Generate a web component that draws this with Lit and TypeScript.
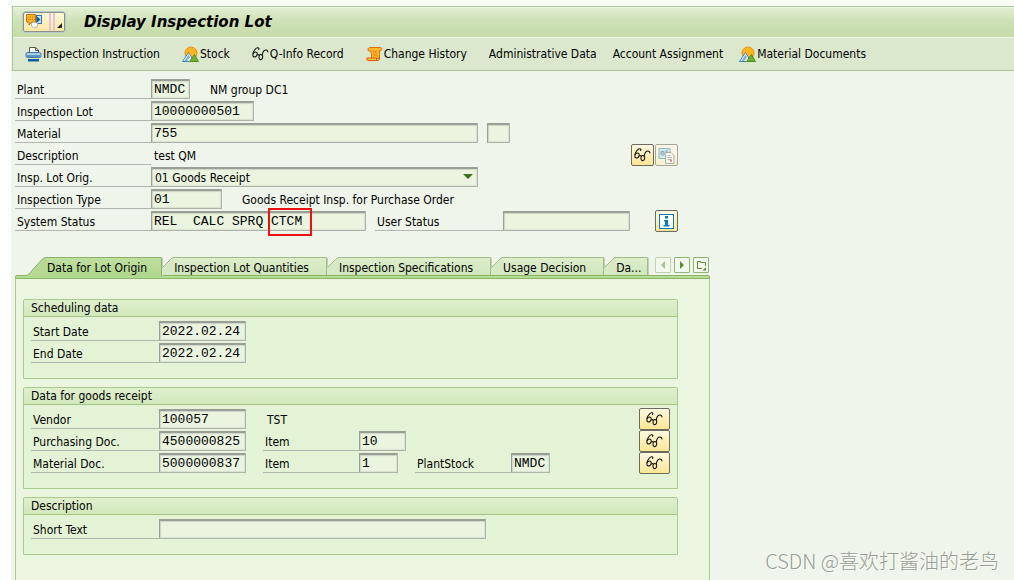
import { LitElement, html, css, nothing } from "lit";
import { customElement, property } from "lit/decorators.js";

const glasses = () => html`<svg class="icon" width="17" height="14" viewBox="0 0 17 14" fill="none" stroke="#111" stroke-width="1.1" aria-hidden="true">
  <path d="M.9 6.800C1.300 4.500 3.600 1 5.400 .8C7 .6 7.300 1.600 6.400 2.900" />
  <path d="M2.600 5.200C4.200 4.500 5.500 5.600 5.200 7.400C4.900 9.200 3.400 10.200 2 9.900C.3 9.500 .4 6.200 2.600 5.200Z" />
  <path d="M5.200 8L7.200 7.600" />
  <path d="M8.200 7.600C9.800 7.200 10.900 8.400 10.700 10C10.500 11.900 9.400 12.900 8.200 12.600C6.600 12.200 6.500 8.200 8.200 7.600Z" />
  <path d="M10.300 8.200C10.500 6 11.600 3.400 13.600 3C15.200 2.800 16 3.800 15.900 5.400" />
</svg>`;

const printer = html`<svg class="icon" width="17" height="17" viewBox="0 0 17 17" aria-hidden="true">
  <path d="M4.500 7V1.500H10.500L13.500 4V7Z" fill="#fff" stroke="#555" />
  <path d="M10.500 1.500V4.500H13.500" fill="none" stroke="#555" />
  <rect x="1" y="6.500" width="15" height="5" rx="1.500" fill="#a9cbe6" stroke="#3a78ad" />
  <rect x="2" y="9" width="13" height="2" fill="#5d97c6" />
  <rect x="3" y="13" width="11" height="2.500" fill="#0f5c99" />
</svg>`;

const stock = html`<svg class="icon" width="17" height="17" viewBox="0 0 17 17" aria-hidden="true">
  <circle cx="9" cy="7" r="6" fill="#fcb51c" stroke="#f08c10" />
  <path d="M.5 15.500L6.500 6.500L12 15.500Z" fill="#fff" stroke="#3d83bb" />
  <path d="M2.500 15L6.500 8.500L8 11.500L5 15Z" fill="#79aed6" />
  <path d="M7.500 15.500L12.500 8.500L16.500 15.500Z" fill="#74b12e" stroke="#4d8e1e" />
</svg>`;

const scroll = html`<svg class="icon" width="17" height="16" viewBox="0 0 17 16" aria-hidden="true">
  <path d="M3.500 1.500H14.500C16.500 2 16 4.500 14.500 4.500H13.500V12.500H5C6 9 5.500 7 4.500 5H2.500C1.500 3.500 2 2 3.500 1.500Z" fill="#fdb92c" stroke="#e06a10" />
  <path d="M.8 12H10.500V14.500H2C1 14.500.600 13.500.800 12Z" fill="#fdc53f" stroke="#d8590d" />
  <path d="M10.500 14.500C13 15 14 13.500 13.500 11.500" fill="none" stroke="#d8590d" />
  <path d="M6 4.500L11 7.500L7 10.500M11 4.500L7 7.500L12 10.500" fill="none" stroke="#f08a18" />
</svg>`;

const services = html`<svg class="icon" width="17" height="15" viewBox="0 0 17 15" aria-hidden="true">
  <path d="M.5 .5H9.500V8H6L3 11V8H.5Z" fill="#fdb52a" stroke="#d86d10" />
  <path d="M2 3H8.500M2 5.500H8.500" stroke="#d86d10" stroke-dasharray="1 1" />
  <rect x="10.500" y="1.500" width="5" height="8" fill="#cfe3f2" stroke="#2d77b2" />
  <path d="M11 2.500L14.500 5.500L11 8.500Z" fill="#125a94" />
  <path d="M5.500 9L8 8L12 9.500L11 13L8 14L5.500 12Z" fill="#fff" stroke="#9b9b9b" stroke-width=".7" />
</svg>`;

const copyDocs = html`<svg class="icon" width="17" height="17" viewBox="0 0 17 17" aria-hidden="true">
  <rect x="1" y="1.500" width="11" height="10" fill="#dcebe9" stroke="#8db8ca" />
  <path d="M3 4.500H6V8H3ZM3 6H6M8 3V6M8 4H10" fill="none" stroke="#7fb0c4" />
  <path d="M7.500 5.500H13L16 8.500V16.500H7.500Z" fill="#fbfaf3" stroke="#adadab" />
  <path d="M9.500 8.500H12.500M9.500 10.500H14M9.500 12.500H13" stroke="#b9b9b6" />
  <rect x="12" y="12.500" width="2" height="2" fill="#e5776a" />
</svg>`;

const info = html`<svg class="icon" width="15" height="15" viewBox="0 0 15 15" aria-hidden="true">
  <rect x=".5" y=".5" width="14" height="14" fill="#fff" stroke="#0a7ac2" />
  <path d="M6 2H9V4.500H6ZM5 6H9V11H10.500V12.500H4.500V11H6V7.500H5Z" fill="#0a7ac2" />
</svg>`;

/** A read-only field; `label` draws the underlined caption in front of it. */
@customElement("sap-field")
class SapField extends LitElement {
  @property() label = "";
  @property() name = "";
  @property() value = "";
  @property() caption = "wide";
  @property() size = "m";

  static styles = css`
    :host { display: flex; height: 20px; }
    .caption {
      box-sizing: border-box; height: 20px; padding-left: 2px; flex: none;
      border-bottom: 1px solid #b2b5ae; line-height: 23px; white-space: nowrap;
    }
    .wide { width: 136px; }
    .medium { width: 128px; }
    .narrow { width: 96px; }
    .box {
      box-sizing: border-box; height: 20px; margin: 0; padding: 0 2px; flex: none;
      border: 1px solid #b0b3aa; border-top: 2px solid #9b9e97; border-left-color: #9b9e97;
      border-radius: 1px; background: #eaf4df; color: #000; outline: none;
      box-shadow: inset 1px 1px 1px #cdd4c5, inset -1px -1px 1px #dae1d1;
      font: 13px/17px "Liberation Mono", monospace;
    }
    .xs { width: 23px; }
    .s { width: 39px; }
    .sm { width: 47px; }
    .type { width: 71px; }
    .m { width: 87px; }
    .l { width: 103px; }
    .user { width: 127px; }
    .status { width: 215px; }
    .xl { width: 327px; }
  `;

  render() {
    return html`
      ${this.label ? html`<label class="caption ${this.caption}" for="box">${this.label}</label>` : nothing}
      <input id="box" class="box ${this.size}" name=${this.name} aria-label=${this.label || this.name} .value=${this.value} readonly />
    `;
  }
}

const toolbar = [
  { text: "Inspection Instruction", icon: printer },
  { text: "Stock", icon: stock },
  { text: "Q-Info Record", icon: glasses() },
  { text: "Change History", icon: scroll },
  { text: "Administrative Data" },
  { text: "Account Assignment" },
  { text: "Material Documents", icon: stock },
];

const tabs = ["Data for Lot Origin", "Inspection Lot Quantities", "Inspection Specifications", "Usage Decision", "Da..."];

@customElement("app-root")
class AppRoot extends LitElement {
  static styles = css`
    :host {
      display: block; color: #000;
      font: 12px/16px "DejaVu Sans Condensed", "DejaVu Sans", sans-serif;
    }
    button { font: inherit; color: inherit; }
    .icon { display: block; flex: none; }
    .page {
      box-sizing: border-box; position: relative; display: flex; flex-direction: column;
      min-height: 100vh; margin-left: 11px; padding-top: 6px; overflow: hidden;
      background: linear-gradient(#fafcf8, #f8faf5 6px, #eff5ea 6px);
    }
    .head { margin-left: 1px; border: 1px solid #afc69c; border-right: 0; }
    .titlebar {
      display: flex; align-items: center; gap: 19px; box-sizing: border-box; height: 30px; padding: 0 10px 2px;
      background: linear-gradient(#e2eed3, #d0e2b9 40%, #c4dba8); border-top: 1px solid #edf5e3;
    }
    .title {
      margin: 0; font: oblique bold 15px/20px "DejaVu Sans", sans-serif; white-space: nowrap;
    }
    .services {
      display: flex; align-items: center; box-sizing: border-box; width: 42px; height: 20px; padding: 0 0 0 2px;
      border: 1px solid #8b8f84; border-radius: 2px; outline: 1px solid #b6c8d0;
      background: linear-gradient(#fff8dc, #fde9a4);
    }
    .split { box-sizing: border-box; width: 6px; height: 18px; margin-left: 6px; border: solid #e8c3d6; border-width: 0 2px; }
    .corner { align-self: flex-end; margin: 0 0 3px 2px; border: 0 solid transparent; border-left-width: 5px; border-bottom: 5px solid #222; }
    .toolbar {
      display: flex; align-items: center; gap: 16px; height: 32px; padding-left: 12px;
      background: #dce8ce; border-top: 1px solid #f3f8ed;
    }
    .tool {
      display: flex; align-items: center; gap: 1px; padding: 0; border: 0; background: none; white-space: nowrap;
    }
    .tool.pictured { padding-right: 6px; }
    .form { display: flex; flex-direction: column; gap: 2px; max-width: 663px; margin: 8px 0 0 4px; }
    .row { display: flex; height: 20px; position: relative; }
    .row.tight { gap: 9px; }
    .note { line-height: 23px; padding-left: 20px; white-space: nowrap; }
    .note.near { padding-left: 3px; }
    .end { display: flex; gap: 1px; margin: -1px 0 -1px auto; }
    .caption {
      box-sizing: border-box; width: 136px; padding-left: 2px; line-height: 23px; border-bottom: 1px solid #b2b5ae;
    }
    .drop { position: relative; width: 327px; }
    .choice {
      appearance: none; box-sizing: border-box; width: 100%; height: 20px; padding: 0 3px; display: block;
      border: 1px solid #b0b3aa; border-top: 2px solid #9b9e97; border-left-color: #9b9e97; border-radius: 1px;
      background: #eaf4df; color: #000; font: inherit;
      box-shadow: inset 1px 1px 1px #cdd4c5, inset -1px -1px 1px #dae1d1;
    }
    .arrow { position: absolute; right: 5px; top: 7px; border: 5px solid transparent; border-top-color: #3b6e1d; border-bottom: 0; pointer-events: none; }
    .marker { position: absolute; left: 253px; top: -3px; width: 40px; height: 24px; border: 2px solid #ee1111; }
    .push {
      display: flex; align-items: center; justify-content: center; box-sizing: border-box; width: 23px; height: 22px; padding: 0;
      border: 1px solid #6c6a5c; border-radius: 2px; background: linear-gradient(#fff9e3, #fff0bb 45%, #fde596);
    }
    .push.wide { width: 31px; }
    .push[disabled] { border-color: #a8a698; background: linear-gradient(#fbf8e8, #f8f1cf); }

    .book { display: flex; flex-direction: column; flex: 1; max-width: 695px; margin: 26px 0 0 4px; }
    .strip { display: flex; align-items: flex-start; position: relative; z-index: 1; margin-bottom: -2px; padding-left: 10px; }
    .tab { display: flex; padding: 0; border: 0; background: none; height: 18px; color: #000; }
    .tab.active { height: 20px; }
    .slope { display: block; flex: none; }
    .face {
      box-sizing: border-box; height: 18px; padding-right: 17px; line-height: 21px; white-space: nowrap;
      border: solid #9dbd83; border-width: 1px 1px 0 0; border-radius: 0 2px 0 0;
      background: linear-gradient(#deedcd, #d0e6ba); box-shadow: 1px 0 #c3d0b8;
    }
    .active .face { height: 20px; background: linear-gradient(#bfdfa1, #b0d68b); border-color: #8bb26a; padding-right: 14px; }
    .tab:last-of-type .face { padding-right: 6px; }
    .pager { display: flex; gap: 3px; margin-left: auto; padding-right: 1px; }
    .page-btn {
      display: flex; align-items: center; justify-content: center; box-sizing: border-box; width: 16px; height: 16px; padding: 0;
      border: 1px solid #8fb573; border-radius: 1px; background: #f3f8ed;
    }
    .page-btn[disabled] { border-color: #bed5ab; }
    .rail { height: 2px; border: 1px solid #8bb566; border-radius: 2px 2px 0 0; background: #b6dc94; }
    .panel {
      display: flex; flex-direction: column; gap: 8px; flex: 1; padding: 20px 31px 25px 7px;
      border: solid #a9cb8d; border-width: 0 1px; background: #ebf5e0;
    }
    .group { margin: 0; border: 1px solid #a9cb8d; border-radius: 2px 2px 0 0; background: #e4f3d5; padding-bottom: 15px; }
    .legend {
      margin: 0; padding-left: 7px; height: 16px; line-height: 17px; font-size: 12px; font-weight: normal;
      border-bottom: 1px solid #a2c584; background: linear-gradient(#e0efcf, #d2e8bb);
    }
    .rows { display: flex; flex-direction: column; gap: 2px; padding: 4px 7px 0; }
    .pair { display: grid; grid-template-columns: 232px 152px auto 1fr; }
    .vendor { padding-left: 4px; line-height: 23px; }
    .watermark {
      position: absolute; right: 15px; bottom: 5px; color: #989d96; text-shadow: 1px 1px #fafcf8;
      font: 300 20px/28px "Noto Sans CJK SC", sans-serif; white-space: nowrap;
    }
  `;

  private tab(text: string, i: number) {
    const active = i === 0;
    return html`<button class="tab ${active ? "active" : ""}" role="tab" aria-selected=${active}>
      ${active
        ? html`<svg class="slope" width="22" height="20" viewBox="0 0 22 20" aria-hidden="true">
            <path d="M0 20V18.500C4 18.500 5 16 7 13.500L17 2.500L20 .5H22V20Z" fill="#b5d992" />
            <path d="M0 18.500C4 18.500 5 16 7 13.500L17 2.500Q18.500 .5 22 .5" fill="none" stroke="#8bb26a" />
          </svg>`
        : html`<svg class="slope" width="12" height="18" viewBox="0 0 12 18" aria-hidden="true">
            <path d="M0 18V11L9 2L12 .5V18Z" fill="#d7e9c4" />
            <path d="M.5 10.500L8.500 2.500Q10 .5 12 .5" fill="none" stroke="#9dbd83" />
          </svg>`}
      <span class="face">${text}</span>
    </button>`;
  }

  private push(label: string, cls = "") {
    return html`<button class="push ${cls}" aria-label=${label}>${glasses()}</button>`;
  }

  render() {
    return html`
      <main class="page">
        <header class="head">
          <div class="titlebar">
            <button class="services" aria-label="Services for object">${services}<span class="split"></span><span class="corner"></span></button>
            <h1 class="title">Display Inspection Lot</h1>
          </div>
          <nav class="toolbar">
            ${toolbar.map((t) => html`<button class="tool ${t.icon ? "pictured" : ""}">${t.icon ?? nothing}<span>${t.text}</span></button>`)}
          </nav>
        </header>

        <section class="form">
          <div class="row"><sap-field label="Plant" value="NMDC" size="s"></sap-field><span class="note">NM group DC1</span></div>
          <div class="row"><sap-field label="Inspection Lot" value="10000000501" size="l"></sap-field></div>
          <div class="row tight"><sap-field label="Material" value="755" size="xl"></sap-field><sap-field name="Revision" size="xs"></sap-field></div>
          <div class="row">
            <span class="caption">Description</span><span class="note near">test QM</span>
            <span class="end">${this.push("Display")}<button class="push" aria-label="Copy" disabled>${copyDocs}</button></span>
          </div>
          <div class="row">
            <label class="caption" for="origin">Insp. Lot Orig.</label>
            <div class="drop"><select id="origin" class="choice"><option>01 Goods Receipt</option></select><span class="arrow"></span></div>
          </div>
          <div class="row"><sap-field label="Inspection Type" value="01" size="type"></sap-field><span class="note">Goods Receipt Insp. for Purchase Order</span></div>
          <div class="row tight">
            <sap-field label="System Status" value="REL  CALC SPRQ CTCM" size="status"></sap-field>
            <sap-field label="User Status" caption="medium" size="user"></sap-field>
            <span class="end"><button class="push" aria-label="Information">${info}</button></span>
            <span class="marker"></span>
          </div>
        </section>

        <section class="book">
          <div class="strip" role="tablist">
            ${tabs.map((t, i) => this.tab(t, i))}
            <div class="pager">
              <button class="page-btn" aria-label="Previous tab" disabled><svg width="6" height="8" viewBox="0 0 6 8"><path d="M5 0V8L1 4Z" fill="#a5c48b" /></svg></button>
              <button class="page-btn" aria-label="Next tab"><svg width="6" height="8" viewBox="0 0 6 8"><path d="M1 0V8L5 4Z" fill="#5c8a38" /></svg></button>
              <button class="page-btn" aria-label="Tab list"><svg width="11" height="11" viewBox="0 0 11 11"><path d="M6 8.500H1.500V1.500H4.500V2.500H9.500V6" fill="none" stroke="#5c8a38" /><path d="M10 7V10.500H6.500Z" fill="#5c8a38" /></svg></button>
            </div>
          </div>
          <div class="rail"></div>
          <div class="panel" role="tabpanel">
            <section class="group">
              <h2 class="legend">Scheduling data</h2>
              <div class="rows">
                <sap-field label="Start Date" caption="medium" value="2022.02.24"></sap-field>
                <sap-field label="End Date" caption="medium" value="2022.02.24"></sap-field>
              </div>
            </section>
            <section class="group">
              <h2 class="legend">Data for goods receipt</h2>
              <div class="rows">
                <div class="row pair">
                  <sap-field label="Vendor" caption="medium" value="100057"></sap-field>
                  <span class="vendor">TST</span><span></span>
                  <span class="end">${this.push("Display vendor", "wide")}</span>
                </div>
                <div class="row pair">
                  <sap-field label="Purchasing Doc." caption="medium" value="4500000825"></sap-field>
                  <sap-field label="Item" caption="narrow" value="10" size="sm"></sap-field><span></span>
                  <span class="end">${this.push("Display purchasing document", "wide")}</span>
                </div>
                <div class="row pair">
                  <sap-field label="Material Doc." caption="medium" value="5000000837"></sap-field>
                  <sap-field label="Item" caption="narrow" value="1" size="s"></sap-field>
                  <sap-field label="PlantStock" caption="narrow" value="NMDC" size="s"></sap-field>
                  <span class="end">${this.push("Display material document", "wide")}</span>
                </div>
              </div>
            </section>
            <section class="group">
              <h2 class="legend">Description</h2>
              <div class="rows"><sap-field label="Short Text" caption="medium" size="xl"></sap-field></div>
            </section>
          </div>
        </section>
        <div class="watermark">CSDN @喜欢打酱油的老鸟</div>
      </main>
    `;
  }
}
